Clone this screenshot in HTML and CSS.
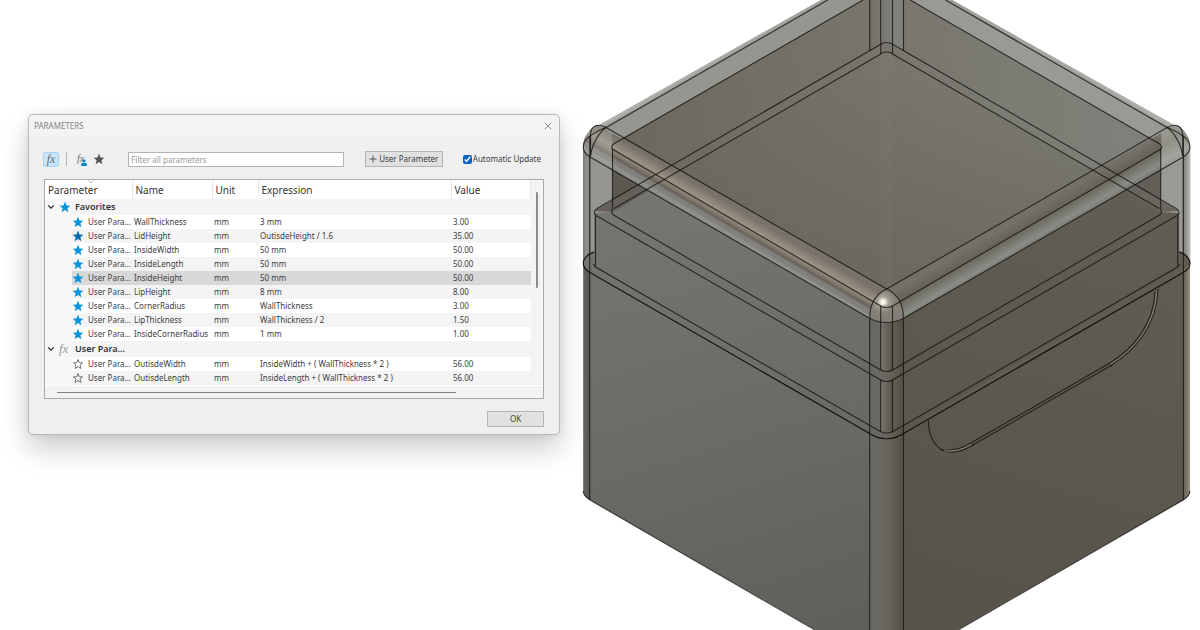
FILE: index.html
```html
<!DOCTYPE html>
<html lang="en">
<head>
<meta charset="utf-8">
<title>Parameters</title>
<meta name="viewport" content="width=device-width, initial-scale=1">
<link rel="stylesheet" href="styles.css">
</head>
<body>
<svg class="symbols" aria-hidden="true">
  <symbol id="star" viewBox="0 0 12 12"><path d="M6 .6l1.5 3.8 4 .3-3.1 2.600 1 4L6 9.100l-3.400 2.200 1-4L.5 4.700l4-.3z"/></symbol>
  <symbol id="star-line" viewBox="0 0 12 12"><path d="M6 1.500l1.200 3.200 3.400.2-2.600 2.200.9 3.400L6 8.600l-2.900 1.900.9-3.400L1.400 4.900l3.400-.2z" fill="none" stroke="#666" stroke-width=".9"/></symbol>
  <symbol id="chevron" viewBox="0 0 8 6"><path d="M1.200 1.300L4 4.200l2.800-2.900" fill="none" stroke="#222" stroke-width="1.200"/></symbol>
</svg>
<main class="page">
  <section class="dialog" role="dialog" aria-labelledby="dialog-title">
    <header class="titlebar">
      <h1 class="title" id="dialog-title">PARAMETERS</h1>
      <button class="close" type="button" aria-label="Close"><svg width="8" height="8" viewBox="0 0 8 8"><path d="M.7.700l6.600 6.600M7.300.700L.7 7.300" stroke="#777" stroke-width=".8"/></svg></button>
    </header>
    <div class="toolbar">
      <button class="tool tool-on" type="button" aria-label="Show all parameters"><i class="fx">fx</i></button>
      <span class="divider"></span>
      <button class="tool tool-user" type="button" aria-label="Show user parameters"><i class="fx fx-small">fx</i><svg class="person" width="6" height="7" viewBox="0 0 6 7"><circle cx="3" cy="1.800" r="1.600" fill="#0a84d0"/><path d="M.2 7V5.200Q.2 3.800 3 3.800T5.800 5.200V7z" fill="#0a84d0"/></svg></button>
      <button class="tool" type="button" aria-label="Show favorites"><svg class="tool-star" width="12" height="12"><use href="#star"/></svg></button>
      <input class="filter" type="text" placeholder="Filter all parameters" aria-label="Filter all parameters">
      <button class="button add" type="button"><svg width="8" height="8" viewBox="0 0 8 8"><path d="M4 .5v7M.5 4h7" stroke="#555" stroke-width="1"/></svg>User Parameter</button>
      <label class="auto"><input class="check" type="checkbox" checked>Automatic Update</label>
    </div>
    <div class="grid">
      <div class="grid-body">
        <table class="params">
          <colgroup><col class="c-param"><col class="c-name"><col class="c-unit"><col class="c-expr"><col></colgroup>
          <thead>
            <tr><th class="sorted" scope="col"><svg class="sort" width="6" height="4" viewBox="0 0 6 4"><path d="M.5.500L3 3 5.500.500" fill="none" stroke="#999" stroke-width=".7"/></svg>Parameter</th><th scope="col">Name</th><th scope="col">Unit</th><th scope="col">Expression</th><th scope="col">Value</th></tr>
          </thead>
          <tbody>
            <tr class="group"><th colspan="5" scope="rowgroup"><span class="group-label"><svg width="8" height="6"><use href="#chevron"/></svg><svg class="blue" width="12" height="12"><use href="#star"/></svg>Favorites</span></th></tr>
            <tr><td><span class="kind"><svg class="blue" width="12" height="12"><use href="#star"/></svg>User Para…</span></td><td>WallThickness</td><td>mm</td><td>3 mm</td><td>3.00</td></tr>
            <tr><td><span class="kind"><svg class="navy" width="12" height="12"><use href="#star"/></svg>User Para…</span></td><td>LidHeight</td><td>mm</td><td>OutisdeHeight / 1.6</td><td>35.00</td></tr>
            <tr><td><span class="kind"><svg class="blue" width="12" height="12"><use href="#star"/></svg>User Para…</span></td><td>InsideWidth</td><td>mm</td><td>50 mm</td><td>50.00</td></tr>
            <tr><td><span class="kind"><svg class="blue" width="12" height="12"><use href="#star"/></svg>User Para…</span></td><td>InsideLength</td><td>mm</td><td>50 mm</td><td>50.00</td></tr>
            <tr class="selected"><td><span class="kind"><svg class="blue" width="12" height="12"><use href="#star"/></svg>User Para…</span></td><td>InsideHeight</td><td>mm</td><td>50 mm</td><td>50.00</td></tr>
            <tr><td><span class="kind"><svg class="blue" width="12" height="12"><use href="#star"/></svg>User Para…</span></td><td>LipHeight</td><td>mm</td><td>8 mm</td><td>8.00</td></tr>
            <tr><td><span class="kind"><svg class="blue" width="12" height="12"><use href="#star"/></svg>User Para…</span></td><td>CornerRadius</td><td>mm</td><td>WallThickness</td><td>3.00</td></tr>
            <tr><td><span class="kind"><svg class="blue" width="12" height="12"><use href="#star"/></svg>User Para…</span></td><td>LipThickness</td><td>mm</td><td>WallThickness / 2</td><td>1.50</td></tr>
            <tr><td><span class="kind"><svg class="blue" width="12" height="12"><use href="#star"/></svg>User Para…</span></td><td>InsideCornerRadius</td><td>mm</td><td>1 mm</td><td>1.00</td></tr>
          </tbody>
          <tbody>
            <tr class="group"><th colspan="5" scope="rowgroup"><span class="group-label"><svg width="8" height="6"><use href="#chevron"/></svg><i class="fx group-fx">fx</i>User Para…</span></th></tr>
            <tr><td><span class="kind"><svg width="12" height="12"><use href="#star-line"/></svg>User Para…</span></td><td>OutisdeWidth</td><td>mm</td><td>InsideWidth + ( WallThickness * 2 )</td><td>56.00</td></tr>
            <tr><td><span class="kind"><svg width="12" height="12"><use href="#star-line"/></svg>User Para…</span></td><td>OutisdeLength</td><td>mm</td><td>InsideLength + ( WallThickness * 2 )</td><td>56.00</td></tr>
          </tbody>
        </table>
        <div class="track-y"><div class="thumb-y"></div></div>
      </div>
      <div class="track-x"><div class="thumb-x"></div></div>
    </div>
    <footer class="actions"><button class="button ok" type="button">OK</button></footer>
  </section>

  <svg class="model" viewBox="580 0 620 630" role="img" aria-label="Box with a transparent lid">
    <defs>
      <linearGradient id="g-rim" gradientUnits="userSpaceOnUse" x1="705" y1="65" x2="712" y2="77"><stop offset="0" stop-color="#b0b3ad"/><stop offset=".5" stop-color="#8f918b"/><stop offset="1" stop-color="#999791"/></linearGradient>
      <linearGradient id="g-inside" gradientUnits="userSpaceOnUse" x1="650" y1="170" x2="1110" y2="90"><stop offset="0" stop-color="#6e695e"/><stop offset=".5" stop-color="#77746c"/><stop offset="1" stop-color="#7f8079"/></linearGradient>
      <linearGradient id="g-floor" gradientUnits="userSpaceOnUse" x1="886" y1="60" x2="886" y2="300"><stop offset="0" stop-color="#69665b" stop-opacity="0"/><stop offset="1" stop-color="#69665b" stop-opacity=".9"/></linearGradient>
      <linearGradient id="g-left" x1="0" y1="0" x2="0.200" y2="1"><stop offset="0" stop-color="#757770"/><stop offset=".45" stop-color="#6c6e67"/><stop offset="1" stop-color="#60615b"/></linearGradient>
      <linearGradient id="g-right" x1="0" y1="0" x2=".2" y2="1"><stop offset="0" stop-color="#625e56"/><stop offset="1" stop-color="#57534b"/></linearGradient>
      <linearGradient id="g-band-l" gradientUnits="userSpaceOnUse" x1="780" y1="234" x2="763" y2="263"><stop offset="0" stop-color="#78726a"/><stop offset=".28" stop-color="#9a9184"/><stop offset=".42" stop-color="#857d71"/><stop offset=".53" stop-color="#68625a"/><stop offset=".6" stop-color="#81807c"/><stop offset=".68" stop-color="#7f7f7c"/><stop offset=".77" stop-color="#929390"/><stop offset="1" stop-color="#747670"/></linearGradient>
      <linearGradient id="g-band-r" gradientUnits="userSpaceOnUse" x1="780" y1="234" x2="763" y2="263"><stop offset="0" stop-color="#747067"/><stop offset=".3" stop-color="#67635a"/><stop offset=".5" stop-color="#77776f"/><stop offset=".72" stop-color="#8a8d86"/><stop offset="1" stop-color="#65625a"/></linearGradient>
      <linearGradient id="g-corner" gradientUnits="userSpaceOnUse" x1="869" y1="0" x2="904" y2="0"><stop offset="0" stop-color="#676862"/><stop offset=".45" stop-color="#6b6760"/><stop offset="1" stop-color="#534f47"/></linearGradient>
      <linearGradient id="g-post" gradientUnits="userSpaceOnUse" x1="880" y1="0" x2="893" y2="0"><stop offset="0" stop-color="#797871"/><stop offset="1" stop-color="#56524a"/></linearGradient>
      <linearGradient id="g-back" gradientUnits="userSpaceOnUse" x1="869" y1="0" x2="904" y2="0"><stop offset="0" stop-color="#716e66"/><stop offset=".5" stop-color="#7c7b74"/><stop offset="1" stop-color="#82837c"/></linearGradient>
      <linearGradient id="g-side" gradientUnits="userSpaceOnUse" x1="583" y1="0" x2="591" y2="0"><stop offset="0" stop-color="#767871"/><stop offset=".4" stop-color="#91938c"/><stop offset="1" stop-color="#7c7e77"/></linearGradient>
      <linearGradient id="g-side-r" gradientUnits="userSpaceOnUse" x1="583" y1="0" x2="591" y2="0"><stop offset="0" stop-color="#bbbbb3"/><stop offset=".5" stop-color="#96958d"/><stop offset="1" stop-color="#76736b"/></linearGradient>
      <linearGradient id="g-base-l" gradientUnits="userSpaceOnUse" x1="583" y1="0" x2="590" y2="0"><stop offset="0" stop-color="#67645d"/><stop offset="1" stop-color="#56564f"/></linearGradient>
      <linearGradient id="g-base-r" gradientUnits="userSpaceOnUse" x1="583" y1="0" x2="590" y2="0"><stop offset="0" stop-color="#989282"/><stop offset="1" stop-color="#5f5b52"/></linearGradient>
      <radialGradient id="g-cap" gradientUnits="userSpaceOnUse" cx="883" cy="302" r="15"><stop offset="0" stop-color="#fff"/><stop offset=".15" stop-color="#f2ede0"/><stop offset=".35" stop-color="#aaa496"/><stop offset="1" stop-color="#807e76" stop-opacity="0"/></radialGradient>
      <path id="s-lid" d="M887 -38L821 0 592 129Q583 135 583 147V264H593L887 264z"/>
      <path id="s-inside" d="M887 -14L613 144 612.500 212 887 371z"/>
      <path id="s-face" d="M583.500 264Q583 254 594 251V213L612.500 212 648.600 191 870 318.500Q878 322.500 887 322.500V671L590 500Q583.500 496 583.500 491z"/>
      <path id="s-band" d="M598 125.300L887 289V322.500Q878 322.500 870 318.500L590 157Q583.300 152 583.300 146C583.500 138 591 125 598 125.300z"/>
      <g id="wires">
        <path d="M827.700 0L608 126.500Q597 131 590 136Q583.300 141 583.300 147Q583.300 153 590 157L870 318.500Q878 322.500 886.600 322.500"/>
        <path d="M863 0L613.500 144Q610 147 613 149.500L880.700 306Q883 307.500 886.600 307.500"/>
        <path d="M590.500 156V134C590.500 128 595 125.300 598 125.300Q602 125.300 606 127.500L886.600 289C878 293 869.700 302 869.700 318.500"/>
        <path d="M590.500 156C592 144 599 132 607 127"/>
        <path d="M612.500 148V209.500Q610.500 212.500 613.500 215L880.700 370Q883 371.500 886.600 371.500"/>
        <path d="M886.600 42.500Q882.500 42.500 880.700 44.300L597 208.500Q592 212 596 215.500L880.700 380Q883 381.500 886.600 381.500"/>
        <path d="M886.600 52Q882.500 52 880.700 54L614 208.500"/>
        <path d="M595.500 215.500V266M593 264L595.500 267 880.700 431.700Q883 433 886.600 433"/>
        <path d="M594 252C581 257 580 267 590 272.500L869.700 433.500Q877 438.700 886.600 438.700" stroke-opacity="1"/>
        <path d="M589.800 136V500M869.700 0V50.500M880.700 0V54M869.700 318.500V630M880.700 306V370M880.700 380V432"/>
        <path d="M583.300 491Q583.500 496 590 500L815 630"/>
      </g>
    </defs>
    <use href="#s-lid" fill="#959690"/>
    <use href="#s-lid" fill="#9a9994" transform="matrix(-1 0 0 1 1773.200 0)"/>
    <path d="M821 0L592 129 597 131 828 0z" fill="url(#g-rim)"/>
    <path d="M821 0L592 129 597 131 828 0z" fill="url(#g-rim)" transform="matrix(-1 0 0 1 1773.200 0)"/>
    <path d="M583 147H591V264H583z" fill="url(#g-side)"/>
    <path d="M583 147H591V264H583z" fill="url(#g-side-r)" transform="matrix(-1 0 0 1 1773.200 0)"/>
    <use href="#s-inside" fill="url(#g-inside)"/>
    <path d="M886.200 -14L1160 144V212L886.200 371z" fill="url(#g-inside)"/>
    <path d="M886.600 52L1145 200 886.600 300 628 200z" fill="url(#g-floor)"/>
    <path d="M869.700 0H903.500V52L886.600 43 869.700 52z" fill="url(#g-back)"/>
    <path d="M880.700 54H892.500V290H880.700z" fill="#8a877e" fill-opacity=".1"/>
    <path d="M612.500 148L668 180 612.500 212z" fill="#5c5750"/>
    <path d="M1160.700 148L1105 180 1160.700 212z" fill="#625f58"/>
    <path d="M594 211L653 177 660 184 612 212z" fill="#65615a"/>
    <path d="M1179 211L1120 177 1113 184 1161 212z" fill="#69665f"/>
    <use href="#s-face" fill="url(#g-left)"/>
    <use href="#s-face" fill="url(#g-right)" transform="matrix(-1 0 0 1 1773.200 0)"/>
    <path d="M583.300 264L590 272V500Q583.300 496 583.300 491z" fill="url(#g-base-l)"/>
    <path d="M583.300 264L590 272V500Q583.300 496 583.300 491z" fill="url(#g-base-r)" transform="matrix(-1 0 0 1 1773.200 0)"/>
    <path d="M869.700 318H903.500V630H869.700z" fill="url(#g-corner)"/>
    <path d="M880.700 307H892.500V371H880.700zM880.700 381H892.500V433H880.700z" fill="url(#g-post)"/>
    <use href="#s-band" fill="url(#g-band-l)"/>
    <use href="#s-band" fill="url(#g-band-r)" transform="matrix(-1 0 0 1 1773.200 0)"/>
    <path d="M583.300 147C584 135 592 125 598 125.300L612 133V169L590 157Q583.300 153 583.300 147z" fill="#b5b4ae" fill-opacity=".35"/>
    <path d="M583.300 147C584 135 592 125 598 125.300L612 133V169L590 157Q583.300 153 583.300 147z" fill="#b9bdb6" fill-opacity=".5" transform="matrix(-1 0 0 1 1773.200 0)"/>
    <path d="M886.600 289C877 293 869.700 302 869.700 318.500Q886 327 903.500 318.500C903.500 302 896 293 886.600 289z" fill="#817f77"/>
    <path d="M886.600 289C877 293 869.700 302 869.700 318.500Q886 327 903.500 318.500C903.500 302 896 293 886.600 289z" fill="url(#g-cap)"/>
    <g fill="none" stroke="#11110e" stroke-width="1.100" stroke-opacity=".78">
      <use href="#wires"/>
      <use href="#wires" transform="matrix(-1 0 0 1 1773.200 0)"/>
      <path d="M928.300 420.500C928.500 437 936 449 946 451.500Q957 454.500 973 445L1111 365.500C1135 351 1157 325 1158 289"/>
      <path d="M940 449.500Q955 452.500 971 443L1109 363.500C1132 350 1154 325 1155 291M971 442.500L973.500 446M1109 363L1111.500 366.500"/>
    </g>
    <path d="M944 450.700Q957 453 972 444M1110 364.500C1134 350 1155.500 325 1156.500 291" fill="none" stroke="#8e8b7f" stroke-width=".9"/>
    <path d="M926 418L1090 323" stroke="#8a867b" stroke-opacity=".3" stroke-width=".8"/>
  </svg>
</main>
</body>
</html>
```
FILE: styles.css
```css
* {
  box-sizing: border-box;
}

body {
  margin: 0;
  background: #fff;
  color: #3c3c3c;
  font: 8px/14px "Noto Sans", "Open Sans", sans-serif;
}

button,
input {
  margin: 0;
  color: inherit;
  font: inherit;
}

.symbols {
  position: absolute;
  width: 0;
  height: 0;
}

.page {
  display: grid;
  grid-template-columns: minmax(0, 29fr) minmax(0, 31fr);
  align-items: start;
  overflow: hidden;
}

.model {
  display: block;
  width: 100%;
}

.dialog {
  margin: 114px 20px 0 28px;
  padding-bottom: 7px;
  border: 1px solid #b9b9b9;
  border-radius: 5px;
  background: #efefef;
  box-shadow: 0 14px 28px rgba(0, 0, 0, 0.2), 0 0 8px rgba(0, 0, 0, 0.08);
}

.titlebar {
  display: flex;
  align-items: center;
  justify-content: space-between;
  height: 21px;
  padding: 0 7px 0 5px;
  border-radius: 5px 5px 0 0;
  background: #f3f3f3;
}

.title {
  margin: 0;
  color: #858585;
  font-size: 8px;
  font-weight: 400;
}

.close {
  display: flex;
  padding: 0;
  border: 0;
  background: none;
}

.toolbar {
  display: flex;
  align-items: center;
  height: 43px;
  padding: 3px 18px 0 14px;
}

.tool {
  display: flex;
  align-items: center;
  justify-content: center;
  height: 15px;
  padding: 0;
  border: 0;
  background: none;
}

.tool-on {
  width: 16px;
  border: 1px solid #a5d3f5;
  border-radius: 2px;
  background: #c8e5fb;
}

.fx {
  color: #6b6b6b;
  font: italic 12px/12px "Liberation Serif", serif;
}

.fx-small {
  font-size: 10px;
}

.divider {
  width: 1px;
  height: 14px;
  margin: 0 10px 0 7px;
  background: #b5b5b5;
}

.person {
  margin: 6px 0 0 -3px;
}

.tool-user {
  margin-right: 6px;
}

.tool-star {
  fill: #555;
}

.filter {
  flex: 1;
  min-width: 0;
  height: 15px;
  margin: 0 21px 0 23px;
  padding: 0 2px;
  border: 1px solid #b4b4b4;
  background: #fff;
}

.filter::placeholder {
  color: #999;
  opacity: 1;
}

.button {
  display: flex;
  align-items: center;
  justify-content: center;
  height: 16px;
  padding: 0 3px;
  border: 1px solid #b5b5b5;
  background: #e1e1e1;
}

.add {
  width: 78px;
  gap: 2px;
  white-space: nowrap;
}

.auto {
  display: flex;
  align-items: center;
  gap: 1px;
  margin-left: 20px;
  white-space: nowrap;
}

.check {
  width: 9px;
  height: 9px;
  accent-color: #0b62bd;
}

.grid {
  margin: 0 15px;
  border: 1px solid #aaa;
  background: #f3f3f3;
}

.grid-body {
  display: flex;
}

.params {
  flex: 1;
  min-width: 0;
  border-collapse: collapse;
  table-layout: fixed;
  text-align: left;
  white-space: nowrap;
}

.c-param {
  width: 87px;
}

.c-name {
  width: 80px;
}

.c-unit {
  width: 46px;
}

.c-expr {
  width: 193px;
}

.params th,
.params td {
  height: 14px;
  padding: 0 0 0 2px;
}

.params thead th {
  height: 19px;
  padding-left: 3px;
  border-right: 1px solid #e6e6e6;
  background: #fff;
  color: #333;
  font-size: 10px;
  font-weight: 400;
}

.params .sorted {
  position: relative;
}

.sort {
  position: absolute;
  top: 0;
  left: 50%;
}

.params tbody tr {
  background: linear-gradient(to right, #f7f7f7 27px, #fff 27px);
}

.params tbody tr:nth-child(odd) {
  background: linear-gradient(to right, #f7f7f7 27px, #f4f4f4 27px);
}

.params tbody .selected {
  background: linear-gradient(to right, #f7f7f7 27px, #d8d8d8 27px);
}

.params tbody .group {
  background: linear-gradient(to right, #f7f7f7 14px, #ededed 14px);
}

.params .group th {
  height: 16px;
  color: #333;
  font-size: 9px;
  font-weight: 600;
}

.group-label {
  display: flex;
  align-items: center;
  gap: 4px;
}

.group-fx {
  width: 12px;
  color: #999;
  font-size: 13px;
}

.kind {
  display: flex;
  align-items: center;
  gap: 4px;
  padding-left: 25px;
}

.blue {
  fill: #0b94dc;
}

.navy {
  fill: #066bb0;
}

.track-y {
  display: flex;
  justify-content: center;
  width: 12px;
  padding-top: 12px;
}

.thumb-y {
  width: 2px;
  height: 96px;
  border-radius: 1px;
  background: #8c8c8c;
}

.track-x {
  padding: 6px 87px 5px 12px;
  border-top: 1px solid #fff;
}

.thumb-x {
  height: 1px;
  background: #808080;
}

.actions {
  display: flex;
  justify-content: flex-end;
  padding: 12px 15px 0;
}

.ok {
  width: 57px;
}
```
